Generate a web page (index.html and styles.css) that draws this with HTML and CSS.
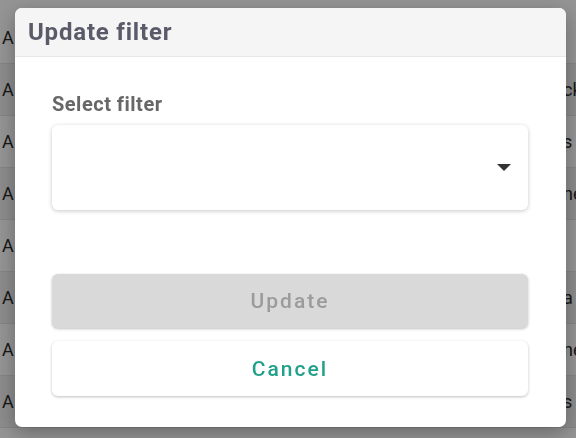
FILE: index.html
```html
<!DOCTYPE html>
<html>
<head>
<meta charset="utf-8">
<link rel="stylesheet" href="styles.css">
</head>
<body>
<div class="table">
  <div class="row"><span class="l">A</span><span class="r"></span></div>
  <div class="row alt"><span class="l">A</span><span class="r">ck</span></div>
  <div class="row"><span class="l">A</span><span class="r">s</span></div>
  <div class="row alt"><span class="l">A</span><span class="r">ne</span></div>
  <div class="row"><span class="l">A</span><span class="r"></span></div>
  <div class="row alt"><span class="l">A</span><span class="r">a</span></div>
  <div class="row"><span class="l">A</span><span class="r">ne</span></div>
  <div class="row alt"><span class="l">A</span><span class="r">s</span></div>
</div>
<div class="overlay">
  <div class="dialog">
    <div class="header"><h1 class="title">Update filter</h1></div>
    <div class="body">
      <label class="label">Select filter</label>
      <div class="select">
        <svg class="arrow" width="14" height="7" viewBox="0 0 14 7"><path d="M0 0H14L7 7Z" fill="#333"/></svg>
      </div>
      <button class="btn update">Update</button>
      <button class="btn cancel">Cancel</button>
    </div>
  </div>
</div>
</body>
</html>
```
FILE: styles.css
```css
html, body {
  margin: 0;
  padding: 0;
  width: 576px;
  height: 438px;
  overflow: hidden;
  font-family: Roboto, "Liberation Sans", sans-serif;
  background: #ffffff;
}
.table {
  padding-top: 12px;
}
.row {
  height: 52px;
  display: flex;
  align-items: center;
  font-size: 18px;
  color: #2a2a2a;
  background: #ffffff;
  border-bottom: 1px solid #e4e4e4;
  box-sizing: border-box;
}
.row.alt {
  background: #f1f1f1;
}
.l {
  padding-left: 2px;
}
.r {
  margin-left: auto;
  width: 13px;
  overflow: hidden;
  white-space: nowrap;
}
.overlay {
  position: fixed;
  inset: 0;
  background: rgba(0, 0, 0, 0.42);
  display: flex;
  align-items: flex-start;
  padding: 8px 0 0 15px;
}
.dialog {
  width: 551px;
  height: 419px;
  background: #ffffff;
  border-radius: 7px;
  overflow: hidden;
  box-shadow: 0 6px 20px rgba(0, 0, 0, 0.3);
  display: flex;
  flex-direction: column;
}
.header {
  height: 48px;
  background: #f5f5f5;
  border-bottom: 1px solid #e7e7e7;
  display: flex;
  align-items: center;
  padding-left: 13px;
}
.title {
  margin: 0;
  font-size: 24px;
  letter-spacing: 0.8px;
  font-weight: 700;
  color: #5a5a69;
}
.body {
  padding: 36px 38px 0 37px;
  display: flex;
  flex-direction: column;
}
.label {
  font-size: 20px;
  letter-spacing: 0.5px;
  line-height: 22px;
  font-weight: 700;
  color: #676767;
  margin-bottom: 10px;
}
.select {
  height: 85px;
  border-radius: 6px;
  background: #fff;
  box-shadow: 0 1px 4px rgba(0, 0, 0, 0.22);
  display: flex;
  align-items: center;
  justify-content: flex-end;
  padding-right: 17px;
  margin-bottom: 64px;
}
.btn {
  border: none;
  border-radius: 6px;
  font-family: Roboto, "Liberation Sans", sans-serif;
  font-size: 21px;
  font-weight: 500;
  letter-spacing: 2px;
  box-shadow: 0 1px 3px rgba(0, 0, 0, 0.25);
}
.update {
  height: 54px;
  background: #d9d9d9;
  color: #9b9b9b;
  margin-bottom: 13px;
}
.cancel {
  height: 55px;
  background: #ffffff;
  color: #22a08a;
}
```
